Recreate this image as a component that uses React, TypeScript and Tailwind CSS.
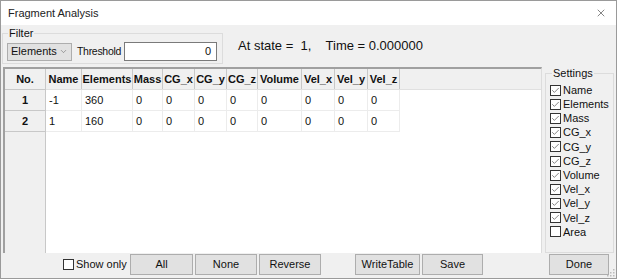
import { X, ChevronDown, Check } from 'lucide-react';

const cols = [
  { key: 'Name', w: 'w-[36px]' },
  { key: 'Elements', w: 'w-[51px]' },
  { key: 'Mass', w: 'w-[30px]' },
  { key: 'CG_x', w: 'w-[32px]' },
  { key: 'CG_y', w: 'w-[32px]' },
  { key: 'CG_z', w: 'w-[31px]' },
  { key: 'Volume', w: 'w-[44px]' },
  { key: 'Vel_x', w: 'w-[33px]' },
  { key: 'Vel_y', w: 'w-[33px]' },
  { key: 'Vel_z', w: 'w-[32px]' },
];

const rows = [
  ['-1', '360', '0', '0', '0', '0', '0', '0', '0', '0'],
  ['1', '160', '0', '0', '0', '0', '0', '0', '0', '0'],
];

const settings = ['Name', 'Elements', 'Mass', 'CG_x', 'CG_y', 'CG_z', 'Volume', 'Vel_x', 'Vel_y', 'Vel_z', 'Area'];

function CheckBox({ checked }: { checked: boolean }) {
  return (
    <span className="w-[11px] h-[11px] border border-[#333] bg-white flex items-center justify-center shrink-0">
      {checked && <Check className="w-[9px] h-[9px] text-[#333]" strokeWidth={1.6} />}
    </span>
  );
}

function Btn({ label, w }: { label: string; w: string }) {
  return (
    <button className={`${w} h-[21px] bg-[#e1e1e1] border border-[#adadad] text-[11px] text-[#111] flex items-center justify-center shrink-0`}>
      {label}
    </button>
  );
}

export default function App() {
  return (
    <div
      className="w-[617px] h-[279px] border border-[#9a9a9a] bg-[#f0f0f0] flex flex-col text-[#111] overflow-hidden"
      style={{ fontFamily: '"Liberation Sans", Arial, sans-serif' }}
    >
      {/* Title bar */}
      <div className="h-[24px] bg-white flex items-center justify-between pl-[7px] pr-[9px] shrink-0">
        <span className="text-[11px] text-[#222]">Fragment Analysis</span>
        <X className="w-[12px] h-[12px] text-[#333]" strokeWidth={1.2} />
      </div>

      {/* Top row */}
      <div className="flex items-start h-[41px] shrink-0">
        <div className="relative ml-[1px] mt-[8px] w-[221px] h-[31px] border border-[#dcdcdc] pl-[4px] pt-[8px]">
          <span className="absolute -top-[7px] left-[5px] px-[1px] bg-[#f0f0f0] text-[11px] leading-[13px]">Filter</span>
          <div className="flex items-center">
            <div className="w-[65px] h-[18px] bg-[#e1e1e1] border border-[#adadad] flex items-center justify-between pl-[3px] pr-[3px] text-[11px]">
              <span>Elements</span>
              <ChevronDown className="w-[9px] h-[9px] text-[#666]" strokeWidth={1.5} />
            </div>
            <span className="ml-[5px] w-[44px] text-[10.5px] tracking-[-0.3px] whitespace-nowrap">Threshold</span>
            <div className="ml-[3px] w-[93px] h-[19px] bg-white border border-[#7a7a7a] flex items-center justify-end pr-[5px] text-[11px]">0</div>
          </div>
        </div>
        <div className="ml-[15px] mt-[13px] text-[13px] leading-[16px] whitespace-pre">At state =  1,    Time = 0.000000</div>
      </div>

      {/* Middle */}
      <div className="flex h-[187px] shrink-0">
        <div className="ml-[2px] mt-[1px] w-[539px] h-[186px] border-t-2 border-l-2 border-t-[#a0a0a0] border-l-[#a0a0a0] border-r border-r-[#dcdcdc] flex bg-white">
          {/* Row header column */}
          <div className="w-[41px] bg-[#f0f0f0] border-r border-[#c8c8c8] flex flex-col shrink-0">
            <div className="h-[21px] border-b border-[#c8c8c8] flex items-center justify-center text-[11px] font-bold">No.</div>
            {rows.map((_, i) => (
              <div key={i} className="h-[21px] border-b border-[#c8c8c8] flex items-center justify-center text-[11px] font-bold">
                {i + 1}
              </div>
            ))}
          </div>
          <div className="flex-1 flex flex-col">
            <div className="h-[21px] bg-[#f0f0f0] flex border-b border-[#e0e0e0]">
              {cols.map((c) => (
                <div key={c.key} className={`${c.w} h-full border-r border-[#c8c8c8] flex items-center justify-center text-[11px] font-bold`}>
                  {c.key}
                </div>
              ))}
            </div>
            {rows.map((r, i) => (
              <div key={i} className="h-[21px] flex">
                {r.map((v, j) => (
                  <div key={j} className={`${cols[j].w} h-full border-r border-b border-[#ececec] flex items-center pl-[3px] text-[11px]`}>
                    {v}
                  </div>
                ))}
              </div>
            ))}
          </div>
        </div>

        <div className="relative ml-[3px] mt-[7px] w-[69px] h-[180px] border border-[#dcdcdc] pl-[4px] pt-[9px]">
          <span className="absolute -top-[7px] left-[6px] px-[1px] bg-[#f0f0f0] text-[11px] leading-[13px]">Settings</span>
          <div className="flex flex-col">
            {settings.map((s) => (
              <div key={s} className="h-[14.2px] flex items-center gap-[2px] text-[11px]">
                <CheckBox checked={s !== 'Area'} />
                <span>{s}</span>
              </div>
            ))}
          </div>
        </div>
      </div>

      {/* Bottom */}
      <div className="flex-1 flex items-start relative">
        <div className="ml-[62px] mt-[1px] w-[67px] h-[21px] flex items-center gap-[2px] text-[11px] shrink-0">
          <CheckBox checked={false} />
          <span className="whitespace-nowrap">Show only</span>
        </div>
        <div className="mt-[1px] flex gap-[2px]">
          <Btn label="All" w="w-[63px]" />
          <Btn label="None" w="w-[62px]" />
          <Btn label="Reverse" w="w-[62px]" />
        </div>
        <div className="ml-[34px] mt-[1px] flex gap-[2px]">
          <Btn label="WriteTable" w="w-[65px]" />
          <Btn label="Save" w="w-[61px]" />
        </div>
        <div className="ml-[66px] mt-[1px]">
          <Btn label="Done" w="w-[60px]" />
        </div>
        <svg className="absolute right-[1px] bottom-[1px]" width="8" height="8" viewBox="0 0 8 8">
          <rect x="6" y="0" width="1.5" height="1.5" fill="#bbb" />
          <rect x="3" y="3" width="1.5" height="1.5" fill="#bbb" />
          <rect x="6" y="3" width="1.5" height="1.5" fill="#bbb" />
          <rect x="0" y="6" width="1.5" height="1.5" fill="#bbb" />
          <rect x="3" y="6" width="1.5" height="1.5" fill="#bbb" />
          <rect x="6" y="6" width="1.5" height="1.5" fill="#bbb" />
        </svg>
      </div>
    </div>
  );
}
